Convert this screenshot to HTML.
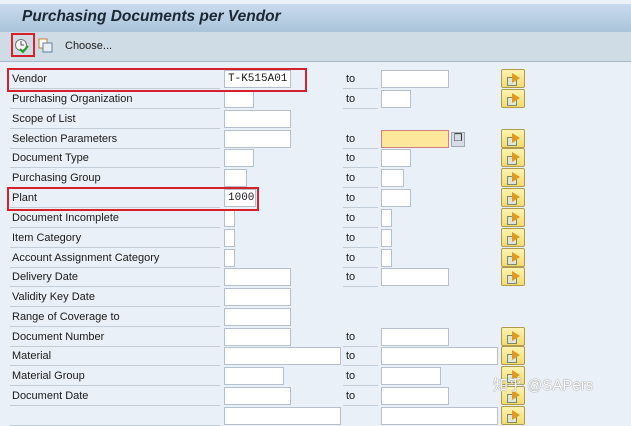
<!DOCTYPE html><html><head><style>
body{margin:0;width:631px;height:411px;overflow:hidden;background:#eaf0f7;font-family:"Liberation Sans",sans-serif;font-size:11px;color:#1a1a1a;position:relative}
.a{position:absolute}
.t{left:0;top:0;width:631px;height:4px;background:#eef2f7}
.tb{left:0;top:4px;width:631px;height:28px;background:linear-gradient(#cadbee,#a9c3d9)}
.tl{left:22px;top:8px;font-size:15.5px;font-weight:bold;font-style:italic;color:#1b2733}
.bar{left:0;top:32px;width:631px;height:29px;background:#cfdce6;border-bottom:1px solid #a9b9c9}
.lb{position:absolute;left:10px;width:210px;height:20px;border-bottom:1px solid #c3cdd8;line-height:21px;padding-left:2px;box-sizing:border-box}
.to{position:absolute;left:343px;width:35px;height:20px;border-bottom:1px solid #c3cdd8;line-height:21px;padding-left:3px;box-sizing:border-box}
.in{position:absolute;height:18px;background:#fff;border:1px solid #b5c0cc;box-sizing:border-box;font-family:"Liberation Mono",monospace;font-size:11px;line-height:16px;padding-left:3px}
.bt{position:absolute;left:501px;width:24px;height:19px;background:linear-gradient(#fdf3b0,#f5dc6e);border:1px solid #b09a50;border-radius:2px;box-sizing:border-box}
.bt:before{content:"";position:absolute;left:5px;top:7px;width:8px;height:7px;background:#dfe6d8;border:1px solid #7a8a70}
.bt:after{content:"";position:absolute;left:10px;top:3px;width:0;height:0;border-left:8px solid #e09a20;border-top:5px solid transparent;border-bottom:5px solid transparent}
.red{position:absolute;border:2px solid #d6202b;box-sizing:border-box}
</style></head><body>
<div class="a t"></div><div class="a tb"></div>
<div class="a tl">Purchasing Documents per Vendor</div>
<div class="a bar"></div>
<svg class="a" style="left:14px;top:38px" width="16" height="16"><circle cx="7" cy="7" r="5.5" fill="#f4f4f4" stroke="#777"/><path d="M7 3v4h3" stroke="#555" fill="none"/><path d="M6 11l3 3 5-6" stroke="#2a9a2a" stroke-width="2" fill="none"/></svg>
<svg class="a" style="left:38px;top:38px" width="16" height="16"><rect x="1" y="1" width="8" height="9" fill="#fff" stroke="#c08020"/><rect x="5" y="5" width="9" height="9" fill="#e8eef4" stroke="#6080a0"/></svg>
<div class="a" style="left:65px;top:40px">Choose...</div>
<div class="red" style="left:11px;top:33px;width:24px;height:24px"></div>

<div class="lb" style="top:69px">Vendor</div><div class="in" style="left:224px;top:70px;width:67px">T-K515A01</div><div class="to" style="top:69px">to</div><div class="in" style="left:381px;top:70px;width:68px"></div><div class="bt" style="top:69px"></div>
<div class="lb" style="top:89px">Purchasing Organization</div><div class="in" style="left:224px;top:90px;width:30px"></div><div class="to" style="top:89px">to</div><div class="in" style="left:381px;top:90px;width:30px"></div><div class="bt" style="top:89px"></div>
<div class="lb" style="top:109px">Scope of List</div><div class="in" style="left:224px;top:110px;width:67px"></div>
<div class="lb" style="top:129px">Selection Parameters</div><div class="in" style="left:224px;top:130px;width:67px"></div><div class="to" style="top:129px">to</div><div class="in" style="left:381px;top:130px;width:68px;background:#fde79a;border-color:#d08080"></div><div class="a" style="left:451px;top:132px;width:12px;height:13px;background:#d6dde6;border:1px solid #a0a8b0;font-size:10px;line-height:12px;text-align:center">❐</div><div class="bt" style="top:129px"></div>
<div class="lb" style="top:148px">Document Type</div><div class="in" style="left:224px;top:149px;width:30px"></div><div class="to" style="top:148px">to</div><div class="in" style="left:381px;top:149px;width:30px"></div><div class="bt" style="top:148px"></div>
<div class="lb" style="top:168px">Purchasing Group</div><div class="in" style="left:224px;top:169px;width:23px"></div><div class="to" style="top:168px">to</div><div class="in" style="left:381px;top:169px;width:23px"></div><div class="bt" style="top:168px"></div>
<div class="lb" style="top:188px">Plant</div><div class="in" style="left:224px;top:189px;width:32px">1000</div><div class="to" style="top:188px">to</div><div class="in" style="left:381px;top:189px;width:30px"></div><div class="bt" style="top:188px"></div>
<div class="lb" style="top:208px">Document Incomplete</div><div class="in" style="left:224px;top:209px;width:11px"></div><div class="to" style="top:208px">to</div><div class="in" style="left:381px;top:209px;width:11px"></div><div class="bt" style="top:208px"></div>
<div class="lb" style="top:228px">Item Category</div><div class="in" style="left:224px;top:229px;width:11px"></div><div class="to" style="top:228px">to</div><div class="in" style="left:381px;top:229px;width:11px"></div><div class="bt" style="top:228px"></div>
<div class="lb" style="top:248px">Account Assignment Category</div><div class="in" style="left:224px;top:249px;width:11px"></div><div class="to" style="top:248px">to</div><div class="in" style="left:381px;top:249px;width:11px"></div><div class="bt" style="top:248px"></div>
<div class="lb" style="top:267px">Delivery Date</div><div class="in" style="left:224px;top:268px;width:67px"></div><div class="to" style="top:267px">to</div><div class="in" style="left:381px;top:268px;width:68px"></div><div class="bt" style="top:267px"></div>
<div class="lb" style="top:287px">Validity Key Date</div><div class="in" style="left:224px;top:288px;width:67px"></div>
<div class="lb" style="top:307px">Range of Coverage to</div><div class="in" style="left:224px;top:308px;width:67px"></div>
<div class="lb" style="top:327px">Document Number</div><div class="in" style="left:224px;top:328px;width:67px"></div><div class="to" style="top:327px">to</div><div class="in" style="left:381px;top:328px;width:68px"></div><div class="bt" style="top:327px"></div>
<div class="lb" style="top:346px">Material</div><div class="in" style="left:224px;top:347px;width:117px"></div><div class="to" style="top:346px">to</div><div class="in" style="left:381px;top:347px;width:117px"></div><div class="bt" style="top:346px"></div>
<div class="lb" style="top:366px">Material Group</div><div class="in" style="left:224px;top:367px;width:60px"></div><div class="to" style="top:366px">to</div><div class="in" style="left:381px;top:367px;width:60px"></div><div class="bt" style="top:366px"></div>
<div class="lb" style="top:386px">Document Date</div><div class="in" style="left:224px;top:387px;width:67px"></div><div class="to" style="top:386px">to</div><div class="in" style="left:381px;top:387px;width:68px"></div><div class="bt" style="top:386px"></div>
<div class="lb" style="top:406px"></div><div class="in" style="left:224px;top:407px;width:117px"></div><div class="in" style="left:381px;top:407px;width:117px"></div><div class="bt" style="top:406px"></div>

<div class="red" style="left:7px;top:68px;width:300px;height:24px"></div>
<div class="red" style="left:7px;top:187px;width:252px;height:24px"></div>
<div class="a" style="left:493px;top:374px;font-family:'Liberation Sans','Noto Sans CJK SC',sans-serif;font-size:15px;color:#fff;text-shadow:0 0 1px #888,0 0 1px #888">知乎 @SAPers</div>
</body></html>
